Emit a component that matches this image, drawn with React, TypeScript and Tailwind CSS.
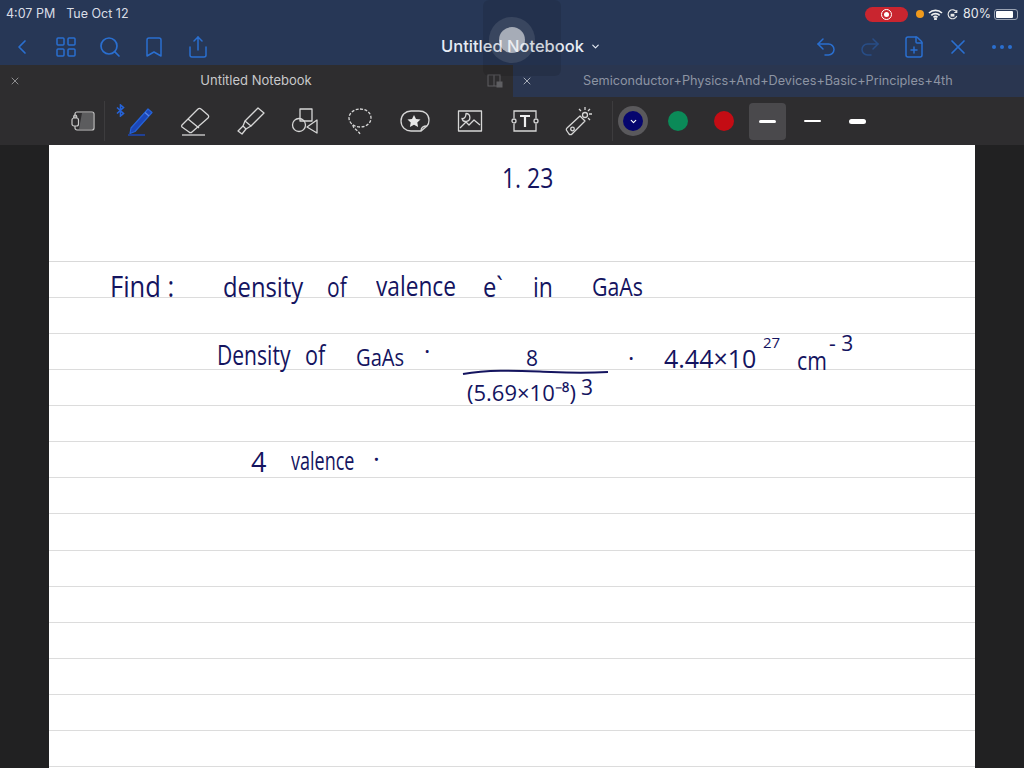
import { Bookmark, ChevronDown, ChevronLeft, FilePlus, LayoutGrid, Redo2, Search, Share, Undo2, X } from 'lucide-react'

const rules = Array.from({ length: 14 })

function PageIcon() {
  return (
    <svg width="24" height="20" viewBox="0 0 24 20" fill="none" stroke="#c9c9c9" strokeWidth="1.200">
      <rect x="4" y="1" width="19" height="18" rx="2" />
      <path d="M11 2h11v16H8z" fill="#5c5c5e" stroke="none" />
      <rect x="1" y="7" width="6.500" height="8" rx="2" fill="#2e2d2f" />
      <path d="M2.700 7V5.500a1.500 1.500 0 0 1 3 0V7" />
    </svg>
  )
}

function PenIcon() {
  return (
    <svg width="30" height="30" viewBox="0 0 30 30" fill="none">
      <path d="M6 22 23 3l4 3.500L10 25.500l-5 2z" fill="#1c47b8" stroke="#2563d8" strokeWidth="1.200" strokeLinejoin="round" />
      <path d="M20 6.500l4 3.500" stroke="#5b86e5" strokeWidth="1.200" />
      <path d="M3 29h17" stroke="#1c47b8" strokeWidth="1.500" />
    </svg>
  )
}

function BluetoothIcon() {
  return (
    <svg width="9" height="13" viewBox="0 0 9 13" fill="none" stroke="#2563d8" strokeWidth="1.600">
      <path d="M1 3.500l6.500 6L4.500 12V1l3 2.500-6.500 6" />
    </svg>
  )
}

function EraserIcon() {
  return (
    <svg width="32" height="30" viewBox="0 0 32 30" fill="none" stroke="#d6d6d6" strokeWidth="1.300" strokeLinejoin="round">
      <path d="M3 19 19 3a2 2 0 0 1 3 0l7 6a2 2 0 0 1 0 3L13 26a2 2 0 0 1-3 0l-7-5a1.500 1.500 0 0 1 0-2z" />
      <path d="M9 13l11 9" />
      <path d="M3 29h23" />
    </svg>
  )
}

function HighlighterIcon() {
  return (
    <svg width="30" height="30" viewBox="0 0 30 30" fill="none" stroke="#d6d6d6" strokeWidth="1.300" strokeLinejoin="round">
      <path d="M10 15 23 2l6 5-13 13z" />
      <path d="M10 15l-2 5 3 3 5-3" />
      <path d="M8 20l-5 5 4 3 4-5" />
    </svg>
  )
}

function ShapesIcon() {
  return (
    <svg width="28" height="27" viewBox="0 0 28 27" fill="none" stroke="#d6d6d6" strokeWidth="1.300" strokeLinejoin="round">
      <rect x="9" y="1" width="12" height="12" />
      <circle cx="8" cy="17" r="6.500" />
      <path d="M26 12v13l-10-6z" />
    </svg>
  )
}

function LassoIcon() {
  return (
    <svg width="26" height="28" viewBox="0 0 26 28" fill="none" stroke="#d6d6d6" strokeWidth="1.300" strokeDasharray="3 1.500">
      <path d="M13 2c6 0 11 3.500 11 9s-5 9-11 9-11-4-11-9 5-9 11-9z" />
      <path d="M6 18c0 4 4 4 7 9" />
    </svg>
  )
}

function StickerIcon() {
  return (
    <svg width="30" height="24" viewBox="0 0 30 24" fill="none" stroke="#d6d6d6" strokeWidth="1.300">
      <path d="M11 2h8c5.500 0 10 3 10 9 0 3-1 5-2 6l-6 5H11C5.500 22 1 18 1 12S5.500 2 11 2z" />
      <path d="M21 22c0-3 2-5 6-5" />
      <path d="M14 6l2 4 4.500.500-3.200 3 .8 4.500-4.100-2.200-4.100 2.200.8-4.500-3.200-3 4.500-.500z" fill="#e8e8e8" stroke="none" />
    </svg>
  )
}

function ImageIcon() {
  return (
    <svg width="26" height="24" viewBox="0 0 26 24" fill="none" stroke="#d6d6d6" strokeWidth="1.300" strokeLinejoin="round">
      <rect x="1.500" y="2" width="23" height="20" />
      <path d="M3 19l6-6 3 3 5-5 6 5" />
      <path d="M9 4.500a4 4 0 1 1-4 5c2 .500 4-1.500 4-5z" />
    </svg>
  )
}

function TextBoxIcon() {
  return (
    <svg width="28" height="24" viewBox="0 0 28 24" fill="none" stroke="#d6d6d6" strokeWidth="1.300">
      <path d="M3 9V2h22v7M3 15v7h22v-7" />
      <circle cx="3" cy="12" r="2" />
      <circle cx="25" cy="12" r="2" />
      <path d="M9 7h10M14 7v11" strokeWidth="2.200" stroke="#eeeeee" />
    </svg>
  )
}

function LaserIcon() {
  return (
    <svg width="30" height="30" viewBox="0 0 30 30" fill="none" stroke="#d6d6d6" strokeWidth="1.300" strokeLinejoin="round">
      <path d="M2 22 15 10l5 5L7 28a2 2 0 0 1-3 0l-2-3a2 2 0 0 1 0-3z" />
      <circle cx="7.500" cy="23" r="1.800" />
      <circle cx="20" cy="9" r="2.500" />
      <path d="M20 1v3M27 8h-3M25 3l-2 2M25 14l-2-2M14 3l2 2" />
    </svg>
  )
}

function WifiIcon() {
  return (
    <svg width="15" height="11" viewBox="0 0 15 11" fill="none" stroke="#f2f2f2" strokeWidth="1.700">
      <path d="M1 4a9.500 9.500 0 0 1 13 0M3.300 6.300a6 6 0 0 1 8.400 0M5.500 8.300a3 3 0 0 1 4 0" />
      <circle cx="7.500" cy="10" r=".6" fill="#f2f2f2" />
    </svg>
  )
}

function RotationLockIcon() {
  return (
    <svg width="11" height="11" viewBox="0 0 11 11" fill="none" stroke="#e8e8e8" strokeWidth="1.100">
      <path d="M9.800 7A4.500 4.500 0 1 1 9.500 3M9.800 1v2.500H7.300" />
      <rect x="3.600" y="4.800" width="3.800" height="2.800" fill="#e8e8e8" stroke="none" />
    </svg>
  )
}

export default function App() {
  return (
    <div className="h-[768px] w-[1024px] overflow-hidden relative bg-[#212122] font-['Inter',sans-serif]">
      {/* header */}
      <div className="bg-[#273756]">
        <div className="h-[28px] flex items-center justify-between pl-[6px] pr-[6px] text-[12.500px] text-[#d9dde6]">
          <div className="flex gap-[11px]">
            <span>4:07 PM</span>
            <span>Tue Oct 12</span>
          </div>
          <div className="flex items-center">
            <div className="w-[43px] h-[15px] rounded-full bg-[#c9252f] flex items-center justify-center">
              <div className="w-[11px] h-[11px] rounded-full border border-white flex items-center justify-center">
                <div className="w-[5px] h-[5px] rounded-full bg-white" />
              </div>
            </div>
            <div className="w-[8px] h-[8px] rounded-full bg-[#f09a1c] ml-[8px]" />
            <div className="ml-[4px] flex"><WifiIcon /></div>
            <div className="ml-[4px] flex"><RotationLockIcon /></div>
            <span className="ml-[5px] text-[#e8eaef]">80%</span>
            <div className="ml-[3px] w-[24px] h-[11px] rounded-[3px] border border-[#9aa3b3] p-[1px]">
              <div className="w-[17px] h-full bg-white rounded-[1px]" />
            </div>
          </div>
        </div>
        <div className="h-[37px] flex items-center justify-between text-[#2a6fd0]">
          <div className="flex items-center gap-[20px] pl-[10px]">
            <ChevronLeft size={24} strokeWidth={1.700} />
            <LayoutGrid size={24} strokeWidth={1.500} />
            <Search size={24} strokeWidth={1.700} />
            <Bookmark size={24} strokeWidth={1.500} />
            <Share size={24} strokeWidth={1.500} />
          </div>
          <div className="flex items-center gap-[6px] text-[16.500px] font-medium text-[#e6ecf5] ml-[18px]">
            Untitled Notebook
            <ChevronDown size={11} strokeWidth={2.500} />
          </div>
          <div className="flex items-center gap-[20px] pr-[10px]">
            <Undo2 size={24} strokeWidth={1.500} />
            <Redo2 size={24} strokeWidth={1.500} className="opacity-40" />
            <FilePlus size={24} strokeWidth={1.500} />
            <X size={24} strokeWidth={1.700} />
            <div className="flex w-[24px] justify-center gap-[4px]">
              <div className="w-[4px] h-[4px] rounded-full bg-[#2a6fd0]" />
              <div className="w-[4px] h-[4px] rounded-full bg-[#2a6fd0]" />
              <div className="w-[4px] h-[4px] rounded-full bg-[#2a6fd0]" />
            </div>
          </div>
        </div>
      </div>

      {/* tabs */}
      <div className="h-[32px] flex text-[13px]">
        <div className="w-[513px] bg-[#2e2d2f] flex items-center relative text-[#c9c9cb]">
          <X size={12} className="ml-[9px] text-[#8e8e90]" />
          <span className="flex-1 text-center pl-[4px]">Untitled Notebook</span>
          <svg width="16" height="14" viewBox="0 0 16 14" fill="none" stroke="#5f5f62" className="mr-[10px]">
            <rect x="1" y="1" width="12" height="11" />
            <path d="M7 1v11" />
            <rect x="10" y="8" width="5" height="5" fill="#5f5f62" />
          </svg>
        </div>
        <div className="flex-1 bg-[#2a3650] flex items-center text-[#8d94a3]">
          <X size={12} className="ml-[8px] text-[#a6acb8]" />
          <span className="ml-[50px] text-[12.700px]">Semiconductor+Physics+And+Devices+Basic+Principles+4th</span>
        </div>
      </div>

      {/* tools */}
      <div className="h-[48px] bg-[#2e2d2f] flex items-center pl-[61px]">
        <div className="w-[44px] h-[40px] flex items-center justify-center border-r border-[#3d3c3e]"><PageIcon /></div>
        <div className="w-[7px]" />
        <div className="w-[55px] flex items-center justify-center relative">
          <PenIcon />
          <span className="absolute left-[4px] top-[-2px] flex"><BluetoothIcon /></span>
        </div>
        <div className="w-[55px] flex items-center justify-center"><EraserIcon /></div>
        <div className="w-[55px] flex items-center justify-center"><HighlighterIcon /></div>
        <div className="w-[55px] flex items-center justify-center"><ShapesIcon /></div>
        <div className="w-[55px] flex items-center justify-center"><LassoIcon /></div>
        <div className="w-[55px] flex items-center justify-center"><StickerIcon /></div>
        <div className="w-[55px] flex items-center justify-center"><ImageIcon /></div>
        <div className="w-[55px] flex items-center justify-center"><TextBoxIcon /></div>
        <div className="w-[55px] flex items-center justify-center"><LaserIcon /></div>
        <div className="w-[6px] h-[40px] border-r border-[#3d3c3e]" />
        <div className="w-[40px] flex justify-center">
          <div className="w-[30px] h-[30px] rounded-full bg-[#5a595c] flex items-center justify-center">
            <div className="w-[20px] h-[20px] rounded-full bg-[#05056e] flex items-center justify-center text-white">
              <ChevronDown size={9} strokeWidth={3} />
            </div>
          </div>
        </div>
        <div className="w-[50px] flex justify-center"><div className="w-[20px] h-[20px] rounded-full bg-[#0b8a58]" /></div>
        <div className="w-[42px] flex justify-center"><div className="w-[20px] h-[20px] rounded-full bg-[#c40c14]" /></div>
        <div className="w-[45px] flex justify-center">
          <div className="w-[37px] h-[37px] rounded-[4px] bg-[#4a494c] flex items-center justify-center">
            <div className="w-[17px] h-[3px] rounded-full bg-white" />
          </div>
        </div>
        <div className="w-[45px] flex justify-center"><div className="w-[17px] h-[2px] rounded-full bg-white" /></div>
        <div className="w-[45px] flex justify-center"><div className="w-[17px] h-[5px] rounded-full bg-white" /></div>
      </div>

      {/* page */}
      <div className="ml-[49px] w-[926px] h-[623px] bg-white relative overflow-hidden font-['Open_Sans',sans-serif] font-medium text-[#14145f]">
        <div className="h-[117px] border-b border-[#d9d9d9]" />
        {rules.map((_, i) => (
          <div key={i} className="h-[36.070px] border-b border-[#dcdcdc]" />
        ))}

        {/* handwriting */}
        <span className="absolute left-[453px] top-[15px] text-[27px] leading-[36px] whitespace-nowrap origin-left scale-x-[0.85]">1. 23</span>
        <span className="absolute left-[61px] top-[123px] text-[29px] leading-[36px] whitespace-nowrap origin-left scale-x-[0.88]">Find :</span>
        <span className="absolute left-[174px] top-[123px] text-[28px] leading-[36px] whitespace-nowrap origin-left scale-x-[0.85]">density</span>
        <span className="absolute left-[278px] top-[123px] text-[28px] leading-[36px] whitespace-nowrap origin-left scale-x-[0.75]">of</span>
        <span className="absolute left-[327px] top-[123px] text-[27px] leading-[36px] whitespace-nowrap origin-left scale-x-[0.84]">valence</span>
        <span className="absolute left-[434px] top-[123px] text-[28px] leading-[36px] whitespace-nowrap origin-left scale-x-[0.85]">e`</span>
        <span className="absolute left-[484px] top-[123px] text-[28px] leading-[36px] whitespace-nowrap origin-left scale-x-[0.82]">in</span>
        <span className="absolute left-[543px] top-[123px] text-[26px] leading-[36px] whitespace-nowrap origin-left scale-x-[0.82]">GaAs</span>
        <span className="absolute left-[168px] top-[192px] text-[27px] leading-[36px] whitespace-nowrap origin-left scale-x-[0.78]">Density</span>
        <span className="absolute left-[256px] top-[192px] text-[27px] leading-[36px] whitespace-nowrap origin-left scale-x-[0.8]">of</span>
        <span className="absolute left-[307px] top-[194px] text-[24px] leading-[36px] whitespace-nowrap origin-left scale-x-[0.84]">GaAs</span>
        <span className="absolute left-[375px] top-[188px] text-[24px] leading-[36px]">·</span>
        <span className="absolute left-[477px] top-[198px] text-[21px] leading-[30px]">8</span>
        <svg width="150" height="8" viewBox="0 0 150 8" fill="none" stroke="#14145f" strokeWidth="2" className="absolute left-[412px] top-[223px]">
          <path d="M2 6C30 1 60 3 90 4c20 1 40 1 57 0" />
        </svg>
        <span className="absolute left-[418px] top-[232px] text-[22px] leading-[30px] whitespace-nowrap">(5.69×10⁻⁸)</span>
        <span className="absolute left-[532px] top-[229px] text-[21px] leading-[26px]">3</span>
        <span className="absolute left-[579px] top-[198px] text-[24px] leading-[30px]">·</span>
        <span className="absolute left-[615px] top-[197px] text-[25px] leading-[32px] whitespace-nowrap">4.44×10</span>
        <span className="absolute left-[714px] top-[187px] text-[15px] leading-[20px]">27</span>
        <span className="absolute left-[748px] top-[200px] text-[25px] leading-[30px] origin-left scale-x-[0.85]">cm</span>
        <span className="absolute left-[780px] top-[184px] text-[21px] leading-[28px] whitespace-nowrap">- 3</span>
        <span className="absolute left-[202px] top-[299px] text-[27px] leading-[36px]">4</span>
        <span className="absolute left-[242px] top-[297px] text-[25px] leading-[36px] whitespace-nowrap origin-left scale-x-[0.72]">valence</span>
        <span className="absolute left-[324px] top-[295px] text-[26px] leading-[36px]">·</span>
      </div>

      {/* touch indicator */}
      <div className="absolute left-[483px] top-0 w-[78px] h-[76px] rounded-[6px] bg-black/10 flex items-center pl-[6px] pt-[4px]">
        <div className="w-[46px] h-[46px] rounded-full bg-white/10 flex items-center justify-center">
          <div className="w-[26px] h-[26px] rounded-full bg-white/55" />
        </div>
      </div>
    </div>
  )
}
